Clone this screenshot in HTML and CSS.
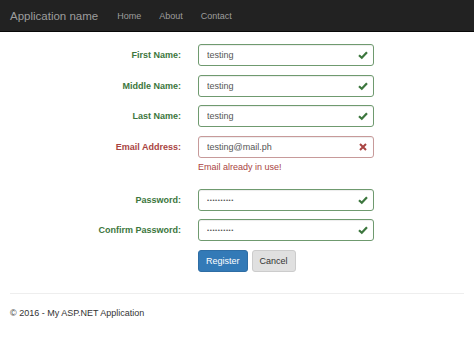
FILE: index.html
```html
<!DOCTYPE html>
<html lang="en">
<head>
    <meta charset="UTF-8">
    <title>Register</title>
    <link rel="stylesheet" href="styles.css">
</head>
<body>
<div class="navbar">
    <span class="brand">Application name</span>
    <ul class="nav">
        <li>Home</li>
        <li>About</li>
        <li>Contact</li>
    </ul>
</div>

<div class="content">
    <form class="form">
        <div class="row ok">
            <label>First Name:</label>
            <div class="field"><input type="text" value="testing"><svg class="icon" viewBox="0 0 10 10"><path d="M1 5.2 L3.8 7.8 L9 2.2" /></svg></div>
        </div>
        <div class="row ok">
            <label>Middle Name:</label>
            <div class="field"><input type="text" value="testing"><svg class="icon" viewBox="0 0 10 10"><path d="M1 5.2 L3.8 7.8 L9 2.2" /></svg></div>
        </div>
        <div class="row ok">
            <label>Last Name:</label>
            <div class="field"><input type="text" value="testing"><svg class="icon" viewBox="0 0 10 10"><path d="M1 5.2 L3.8 7.8 L9 2.2" /></svg></div>
        </div>
        <div class="row bad">
            <label>Email Address:</label>
            <div class="field"><input type="text" value="testing@mail.ph"><svg class="icon" viewBox="0 0 10 10"><path d="M2 2 L8 8 M8 2 L2 8" /></svg></div>
            <span class="help">Email already in use!</span>
        </div>
        <div class="row ok gap">
            <label>Password:</label>
            <div class="field"><input type="password" value="testingabc"><svg class="icon" viewBox="0 0 10 10"><path d="M1 5.2 L3.8 7.8 L9 2.2" /></svg></div>
        </div>
        <div class="row ok">
            <label>Confirm Password:</label>
            <div class="field"><input type="password" value="testingabc"><svg class="icon" viewBox="0 0 10 10"><path d="M1 5.2 L3.8 7.8 L9 2.2" /></svg></div>
        </div>
        <div class="row">
            <label></label>
            <div class="buttons">
                <button type="button" class="btn primary">Register</button>
                <button type="button" class="btn">Cancel</button>
            </div>
        </div>
    </form>

    <hr>
    <footer>&copy; 2016 - My ASP.NET Application</footer>
</div>
</body>
</html>
```

FILE: styles.css
```css
*{
    margin:0;
    padding:0;
    box-sizing: border-box;
}
body{
    font-family: "Liberation Sans", Arial, sans-serif;
    font-size: 9px;
    color: #333;
    background: #fff;
}
.navbar{
    height: 32px;
    background: #222;
    border-bottom: 1px solid #080808;
    display: flex;
    align-items: center;
    padding-left: 10px;
}
.brand{
    font-size: 11.5px;
    color: #9d9d9d;
    margin-right: 19px;
}
.nav{
    list-style: none;
    display: flex;
    gap: 18px;
}
.nav li{
    font-size: 9px;
    color: #9d9d9d;
}
.content{
    padding: 12px 10px 0;
}
.row{
    display: flex;
    flex-wrap: wrap;
    align-items: center;
    margin-bottom: 8.5px;
}
.row label{
    width: 171px;
    text-align: right;
    font-weight: bold;
    margin-right: 17px;
}
.ok label{
    color: #3c763d;
}
.bad label{
    color: #a94442;
}
.field{
    position: relative;
    width: 176px;
    height: 22px;
}
.field input{
    width: 100%;
    height: 100%;
    border: 1px solid #6f9a6f;
    border-radius: 3px;
    padding: 0 20px 0 8px;
    font-family: inherit;
    font-size: 9px;
    color: #555;
    box-shadow: inset 0 1px 1px rgba(0,0,0,.075);
    outline: none;
}
.field input[type=password]{
    font-size: 6px;
    letter-spacing: 0.6px;
}
.bad .field input{
    border-color: #c79a9a;
}
.icon{
    position: absolute;
    right: 6px;
    top: 6px;
    width: 10px;
    height: 10px;
    fill: none;
    stroke: #3c763d;
    stroke-width: 2.2;
}
.bad .icon{
    stroke: #a94442;
    stroke-width: 2;
}
.help{
    width: 100%;
    padding-left: 188px;
    margin-top: 2px;
    color: #a94442;
    line-height: 14px;
}
.gap{
    padding-top: 6.5px;
}
.buttons{
    display: flex;
    gap: 4px;
}
.btn{
    height: 22px;
    padding: 0 7px;
    border: 1px solid #ccc;
    border-radius: 3px;
    background: #e0e0e0;
    color: #333;
    font-family: inherit;
    font-size: 9px;
}
.btn.primary{
    background: #337ab7;
    border-color: #2e6da4;
    color: #fff;
}
hr{
    border: 0;
    border-top: 1px solid #eee;
    margin: 21px 0 13px;
}
footer{
    font-size: 9px;
    line-height: 12px;
    color: #333;
}
```
